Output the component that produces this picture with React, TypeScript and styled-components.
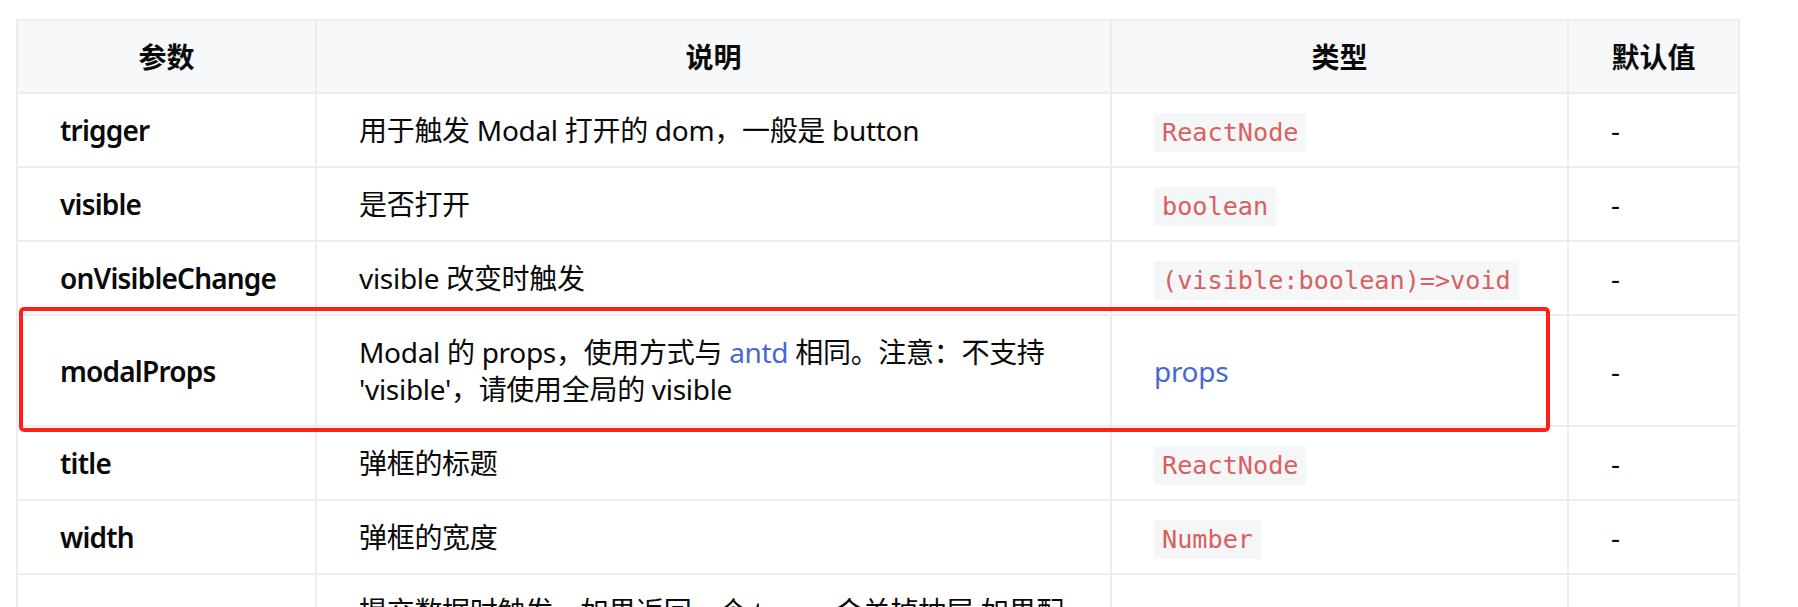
import React from "react";
import styled, { createGlobalStyle } from "styled-components";

const GlobalStyle = createGlobalStyle`
  html, body {
    margin: 0;
    padding: 0;
    background: #ffffff;
    overflow: hidden;
  }
  body {
    font-family: "Noto Sans", "Noto Sans CJK SC", sans-serif;
    color: #111111;
  }
`;

const Page = styled.div`
  position: relative;
  padding: 19px 0 0 16px;
`;

const Table = styled.table`
  width: 1722px;
  table-layout: fixed;
  border-collapse: collapse;
  border: 2px solid #ebedf1;
  font-size: 28px;
  line-height: 37px;
`;

const Col = styled.col<{ $width: number }>`
  width: ${(p) => p.$width}px;
`;

const Th = styled.th`
  padding: 17px 42px;
  background: #f7f8fa;
  border: 2px solid #ebedf1;
  font-family: "Noto Sans CJK SC", sans-serif;
  font-weight: 700;
  color: #0a0a0a;
  text-align: center;
`;

const Row = styled.tr`
  border-bottom: 2px solid #ebedf1;
`;

const Td = styled.td<{ $name?: boolean; $nowrap?: boolean }>`
  padding: 18px 42px 17px;
  border: 2px solid #ebedf1;
  vertical-align: middle;
  text-align: left;
  font-weight: ${(p) => (p.$name ? 600 : 400)};
  letter-spacing: ${(p) => (p.$name ? "-0.8px" : "-0.3px")};
  white-space: ${(p) => (p.$nowrap ? "nowrap" : "normal")};
  color: #0a0a0a;
`;

const Code = styled.code`
  font-family: "DejaVu Sans Mono", monospace;
  font-size: 25.2px;
  line-height: 1;
  letter-spacing: 0;
  color: #d9605e;
  background: #f5f6f8;
  padding: 5px 8px;
`;

const Link = styled.a`
  color: #4569d4;
  text-decoration: none;
`;

const Highlight = styled.div`
  position: absolute;
  left: 19px;
  top: 307px;
  width: 1531px;
  height: 125px;
  box-sizing: border-box;
  border: 4px solid #ff1f16;
  border-radius: 5px;
  pointer-events: none;
`;

type Item = {
  name: string;
  desc: React.ReactNode;
  type: React.ReactNode;
  def: string;
  nowrap?: boolean;
};

const items: Item[] = [
  {
    name: "trigger",
    desc: "用于触发 Modal 打开的 dom，一般是 button",
    type: <Code>ReactNode</Code>,
    def: "-",
  },
  { name: "visible", desc: "是否打开", type: <Code>boolean</Code>, def: "-" },
  {
    name: "onVisibleChange",
    desc: "visible 改变时触发",
    type: <Code>(visible:boolean)=&gt;void</Code>,
    def: "-",
  },
  {
    name: "modalProps",
    desc: (
      <>
        Modal 的 props，使用方式与 <Link href="#">antd</Link> 相同。注意：不支持
        <br />
        'visible'，请使用全局的 visible
      </>
    ),
    type: <Link href="#">props</Link>,
    def: "-",
    nowrap: true,
  },
  { name: "title", desc: "弹框的标题", type: <Code>ReactNode</Code>, def: "-" },
  { name: "width", desc: "弹框的宽度", type: <Code>Number</Code>, def: "-" },
  {
    name: "onFinish",
    desc: (
      <>
        提交数据时触发，如果返回一个 true，会关掉抽屉,如果配
        <br />
        置了 destroyOnClose 还会重置表单
      </>
    ),
    type: <Code>async (values)=&gt;boolean</Code>,
    def: "-",
    nowrap: true,
  },
];

export default function App() {
  return (
    <>
      <GlobalStyle />
      <Page>
        <Table>
          <colgroup>
            <Col $width={299} />
            <Col $width={795} />
            <Col $width={457} />
            <Col $width={171} />
          </colgroup>
          <thead>
            <tr>
              <Th>参数</Th>
              <Th>说明</Th>
              <Th>类型</Th>
              <Th>默认值</Th>
            </tr>
          </thead>
          <tbody>
            {items.map((it) => (
              <Row key={it.name}>
                <Td $name>{it.name}</Td>
                <Td $nowrap={it.nowrap}>{it.desc}</Td>
                <Td>{it.type}</Td>
                <Td>{it.def}</Td>
              </Row>
            ))}
          </tbody>
        </Table>
        <Highlight />
      </Page>
    </>
  );
}
